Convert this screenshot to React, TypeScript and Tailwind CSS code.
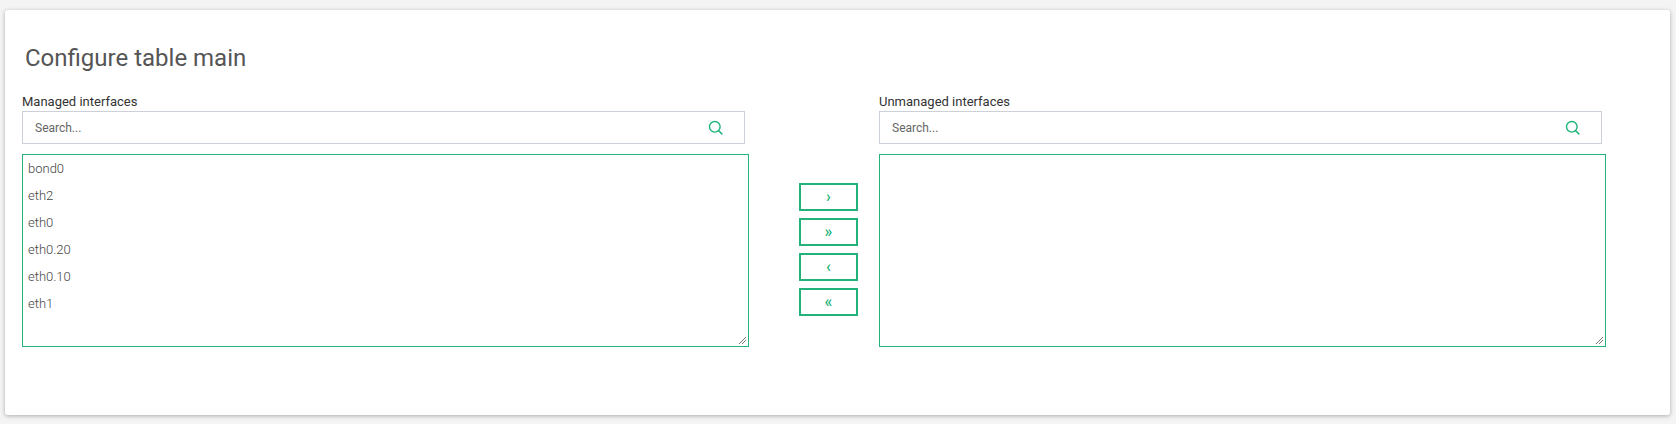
import React from "react";

const items = ["bond0", "eth2", "eth0", "eth0.20", "eth0.10", "eth1"];

function Search() {
  return (
    <div className="flex h-[33px] w-[723px] items-center justify-between border border-[#ccd1d9] bg-white pl-[12px] pr-[20px]">
      <span className="text-[12px] text-[#666]">Search...</span>
      <svg width="17" height="17" viewBox="0 0 24 24" fill="none" stroke="#22b37a" strokeWidth="2" strokeLinecap="round">
        <circle cx="11" cy="11" r="7.5" />
        <path d="M16.5 16.5L21 21" />
      </svg>
    </div>
  );
}

function Column({ label, list }: { label: string; list: string[] }) {
  return (
    <div className="flex w-[727px] flex-col">
      <div className="h-[19px] text-[13px] leading-[19px] text-[#333]">{label}</div>
      <Search />
      <div className="relative mt-[10px] h-[193px] w-[727px] border border-[#22b37a] bg-white pt-[4px]">
        {list.map((i) => (
          <div key={i} className="h-[27px] pl-[5px] text-[13px] font-light leading-[20px] text-[#444]">{i}</div>
        ))}
        <svg className="absolute bottom-[1px] right-[1px]" width="9" height="9" viewBox="0 0 9 9" stroke="#777" strokeWidth="1">
          <path d="M8 1L1 8M8 4L4 8" />
        </svg>
      </div>
    </div>
  );
}

function Btn({ t }: { t: string }) {
  return (
    <button className="flex h-[28px] w-[59px] items-center justify-center border-2 border-[#22b37a] bg-white text-[16px] font-medium leading-none text-[#22b37a]">
      {t}
    </button>
  );
}

export default function App() {
  return (
    <div className="h-[424px] w-[1676px] bg-[#f4f4f4] pt-[10px] pl-[5px]" style={{ fontFamily: "Roboto, 'Liberation Sans', sans-serif" }}>
      <div className="h-[405px] w-[1665px] rounded-[3px] bg-white pl-[17px] pt-[34px] shadow-[0_1px_4px_rgba(0,0,0,0.3)]">
        <div className="pl-[3px] text-[24px] leading-[28px] text-[#555]">Configure table main</div>
        <div className="mt-[20px] flex">
          <Column label="Managed interfaces" list={items} />
          <div className="ml-[50px] mr-[21px] mt-[91px] flex flex-col gap-[7px]">
            <Btn t="›" />
            <Btn t="»" />
            <Btn t="‹" />
            <Btn t="«" />
          </div>
          <Column label="Unmanaged interfaces" list={[]} />
        </div>
      </div>
    </div>
  );
}
